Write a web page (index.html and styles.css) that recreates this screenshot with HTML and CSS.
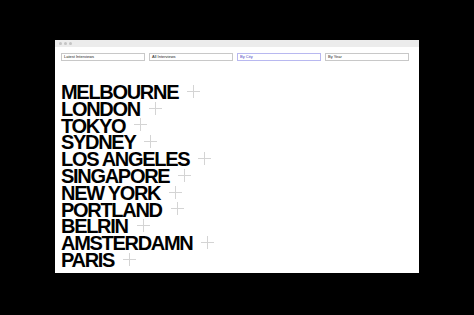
FILE: index.html
```html
<!DOCTYPE html>
<html>
	<head>
		<meta charset="UTF-8">
		<title>Interviews</title>
		<link rel="stylesheet" href="styles.css">
	</head>
	<body>
		<div class="window">
			<div class="titlebar">
				<span class="dot"></span>
				<span class="dot"></span>
				<span class="dot"></span>
			</div>
			<div class="filters">
				<div class="field">Latest Interviews</div>
				<div class="field">All Interviews</div>
				<div class="field active">By City</div>
				<div class="field">By Year</div>
			</div>
			<ul class="cities">
				<li>MELBOURNE<span class="plus"></span></li>
				<li>LONDON<span class="plus"></span></li>
				<li>TOKYO<span class="plus"></span></li>
				<li>SYDNEY<span class="plus"></span></li>
				<li>LOS ANGELES<span class="plus"></span></li>
				<li>SINGAPORE<span class="plus"></span></li>
				<li>NEW YORK<span class="plus"></span></li>
				<li>PORTLAND<span class="plus"></span></li>
				<li>BELRIN<span class="plus"></span></li>
				<li>AMSTERDAMN<span class="plus"></span></li>
				<li>PARIS<span class="plus"></span></li>
			</ul>
		</div>
	</body>
</html>
```

FILE: styles.css
```css
body{
	margin: 0;
	width: 474px;
	height: 315px;
	background: #000;
	font-family: "Liberation Sans", Arial, sans-serif;
	overflow: hidden;
}
.window{
	margin: 40px 0 0 55px;
	width: 364px;
	height: 233px;
	background: #fff;
}
.titlebar{
	height: 7px;
	background: #ececec;
	display: flex;
	align-items: center;
	gap: 2px;
	padding-left: 4px;
}
.dot{
	width: 3px;
	height: 3px;
	border-radius: 50%;
	background: #c4c4c4;
}
.filters{
	display: flex;
	gap: 4px;
	padding: 6px 0 0 6px;
}
.field{
	width: 80px;
	height: 6px;
	border: 1px solid #c8c8c8;
	font-size: 4px;
	line-height: 6px;
	padding-left: 2px;
	color: #222;
	overflow: hidden;
	white-space: nowrap;
}
.field.active{
	border-color: #b8b8f0;
	color: #4040c0;
}
.cities{
	list-style: none;
	margin: 23px 0 0 6px;
	padding: 0;
}
.cities li{
	font-size: 20px;
	font-weight: bold;
	line-height: 16.8px;
	letter-spacing: -1.3px;
	color: #000;
	display: flex;
	align-items: center;
}
.plus{
	position: relative;
	width: 13px;
	height: 13px;
	margin-left: 9px;
	margin-top: -2px;
}
.plus::before,
.plus::after{
	content: "";
	position: absolute;
	background: #d4d4d4;
}
.plus::before{
	left: 6px;
	top: 0;
	width: 1px;
	height: 13px;
}
.plus::after{
	left: 0;
	top: 6px;
	width: 13px;
	height: 1px;
}
```
